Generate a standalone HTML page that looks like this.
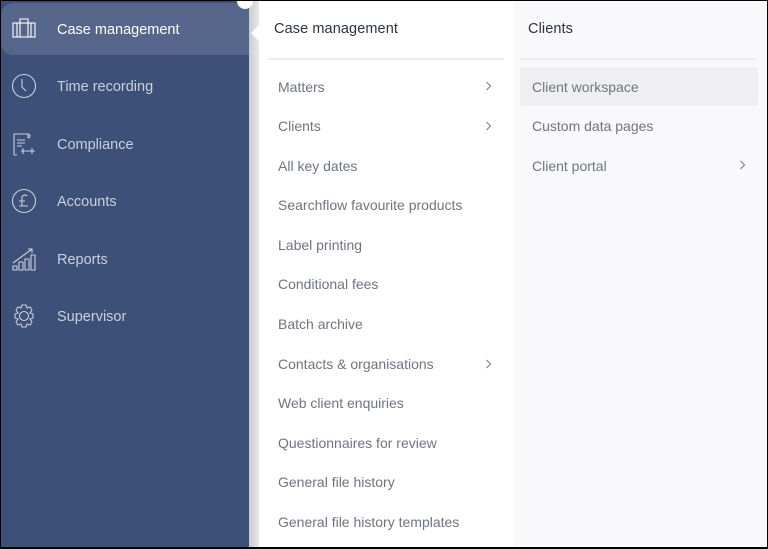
<!DOCTYPE html>
<html><head><meta charset="utf-8"><style>
*{margin:0;padding:0;box-sizing:border-box}
html,body{width:768px;height:549px;overflow:hidden;background:#000}
#wrap{position:absolute;left:1px;top:1px;width:766px;height:546px;background:#fff;overflow:hidden;font-family:"Liberation Sans",sans-serif}
#side{position:absolute;left:0;top:0;width:248px;height:546px;background:#3d5077}
.si{position:absolute;left:0;height:52px;width:248px;color:#c9d0dd;font-size:14.5px}
.si svg{position:absolute;left:10px;top:13px}
.si span{position:absolute;left:56px;top:19px;line-height:17px}
.act{background:#55668a;border-radius:12px 0 0 12px;color:#fff}
#strip{position:absolute;left:248px;top:0;width:10px;height:546px;background:linear-gradient(90deg,#c9cbcf,#e8e9eb)}
#mid{position:absolute;left:258px;top:0;width:254px;height:546px;background:#fff}
#right{position:absolute;left:512px;top:0;width:254px;height:546px;background:#f9f9fb}
h3{position:absolute;top:20px;font-size:14.5px;font-weight:normal;color:#2c3340;letter-spacing:.1px}
.hr{position:absolute;top:57px;height:2px;background:#ececee}
.it{position:absolute;height:39px;display:flex;align-items:center;color:#6f7480;font-size:14px}
.chev{position:absolute;width:7px;height:10px}
</style></head><body><div id="wrap">
<div id="side">
 <div class="si act" style="top:2px"><svg width="26" height="24" viewBox="0 0 26 24" fill="none" stroke="#fff" stroke-width="1.1"><rect x="2" y="7" width="22" height="14"/><path d="M9 7V3h8v4M6 7v14M20 7v14M9 7v14M17 7v14"/></svg><span>Case management</span></div>
 <div class="si" style="top:59px"><svg width="26" height="26" viewBox="0 0 26 26" fill="none" stroke="#c9d0dd" stroke-width="1.1"><circle cx="13" cy="13" r="11.5"/><path d="M11 6v8l4 4"/></svg><span>Time recording</span></div>
 <div class="si" style="top:117px"><svg width="26" height="26" viewBox="0 0 26 26" fill="none" stroke="#c9d0dd" stroke-width="1.1"><path d="M3 24V3h14v4M3 24h3M6 9h8M6 12h8M6 15h5M10 20h14M12 17v6M21 17v6M17 3a2 2 0 010 4"/></svg><span>Compliance</span></div>
 <div class="si" style="top:174px"><svg width="26" height="26" viewBox="0 0 26 26" fill="none" stroke="#c9d0dd" stroke-width="1.1"><circle cx="13" cy="13" r="11.5"/><path d="M16 8a3 3 0 00-5 1v9M8 13h6M8 18h9"/></svg><span>Accounts</span></div>
 <div class="si" style="top:232px"><svg width="26" height="26" viewBox="0 0 26 26" fill="none" stroke="#c9d0dd" stroke-width="1.1"><path d="M2 17L21 3M17 3h4v4M2 24h4v-4H2zM8 24h4v-8H8zM14 24h4v-11h-4zM20 24h4V9h-4z"/></svg><span>Reports</span></div>
 <div class="si" style="top:289px"><svg width="26" height="26" viewBox="0 0 26 26" fill="none" stroke="#c9d0dd" stroke-width="1.1"><circle cx="13" cy="13" r="4.5"/><path d="M11 2h4l1 3 3-1 2 3-2 3 3 1v4l-3 1 2 3-2 3-3-1-1 3h-4l-1-3-3 1-2-3 2-3-3-1v-4l3-1-2-3 2-3 3 1z"/></svg><span>Supervisor</span></div>
</div>
<div id="strip"></div>
<div style="position:absolute;left:236px;top:-8px;width:16px;height:16px;border-radius:50%;background:#fff"></div>
<div style="position:absolute;left:250px;top:24px;width:0;height:0;border-top:8px solid transparent;border-bottom:8px solid transparent;border-right:8px solid #fff"></div>
<div id="mid">
 <h3 style="left:15px">Case management</h3>
 <div class="hr" style="left:9px;width:236px"></div>
 <div class="it" style="left:19px;top:66px">Matters</div><svg class="chev" style="left:226px;top:80px" viewBox="0 0 7 10" fill="none" stroke="#7a7f8a" stroke-width="1.1"><path d="M1.5 1l4 4-4 4"/></svg>
 <div class="it" style="left:19px;top:105px">Clients</div><svg class="chev" style="left:226px;top:120px" viewBox="0 0 7 10" fill="none" stroke="#7a7f8a" stroke-width="1.1"><path d="M1.5 1l4 4-4 4"/></svg>
 <div class="it" style="left:19px;top:145px">All key dates</div>
 <div class="it" style="left:19px;top:184px">Searchflow favourite products</div>
 <div class="it" style="left:19px;top:224px">Label printing</div>
 <div class="it" style="left:19px;top:263px">Conditional fees</div>
 <div class="it" style="left:19px;top:303px">Batch archive</div>
 <div class="it" style="left:19px;top:343px">Contacts &amp; organisations</div><svg class="chev" style="left:226px;top:358px" viewBox="0 0 7 10" fill="none" stroke="#7a7f8a" stroke-width="1.1"><path d="M1.5 1l4 4-4 4"/></svg>
 <div class="it" style="left:19px;top:382px">Web client enquiries</div>
 <div class="it" style="left:19px;top:422px">Questionnaires for review</div>
 <div class="it" style="left:19px;top:461px">General file history</div>
 <div class="it" style="left:19px;top:501px">General file history templates</div>
</div>
<div id="right">
 <h3 style="left:15px">Clients</h3>
 <div class="hr" style="left:7px;width:236px"></div>
 <div style="position:absolute;left:7px;top:66px;width:238px;height:39px;background:#efeff1;border-radius:3px"></div>
 <div class="it" style="left:19px;top:66px">Client workspace</div>
 <div class="it" style="left:19px;top:105px">Custom data pages</div>
 <div class="it" style="left:19px;top:145px">Client portal</div><svg class="chev" style="left:226px;top:159px" viewBox="0 0 7 10" fill="none" stroke="#7a7f8a" stroke-width="1.1"><path d="M1.5 1l4 4-4 4"/></svg>
</div>
</div></body></html>
